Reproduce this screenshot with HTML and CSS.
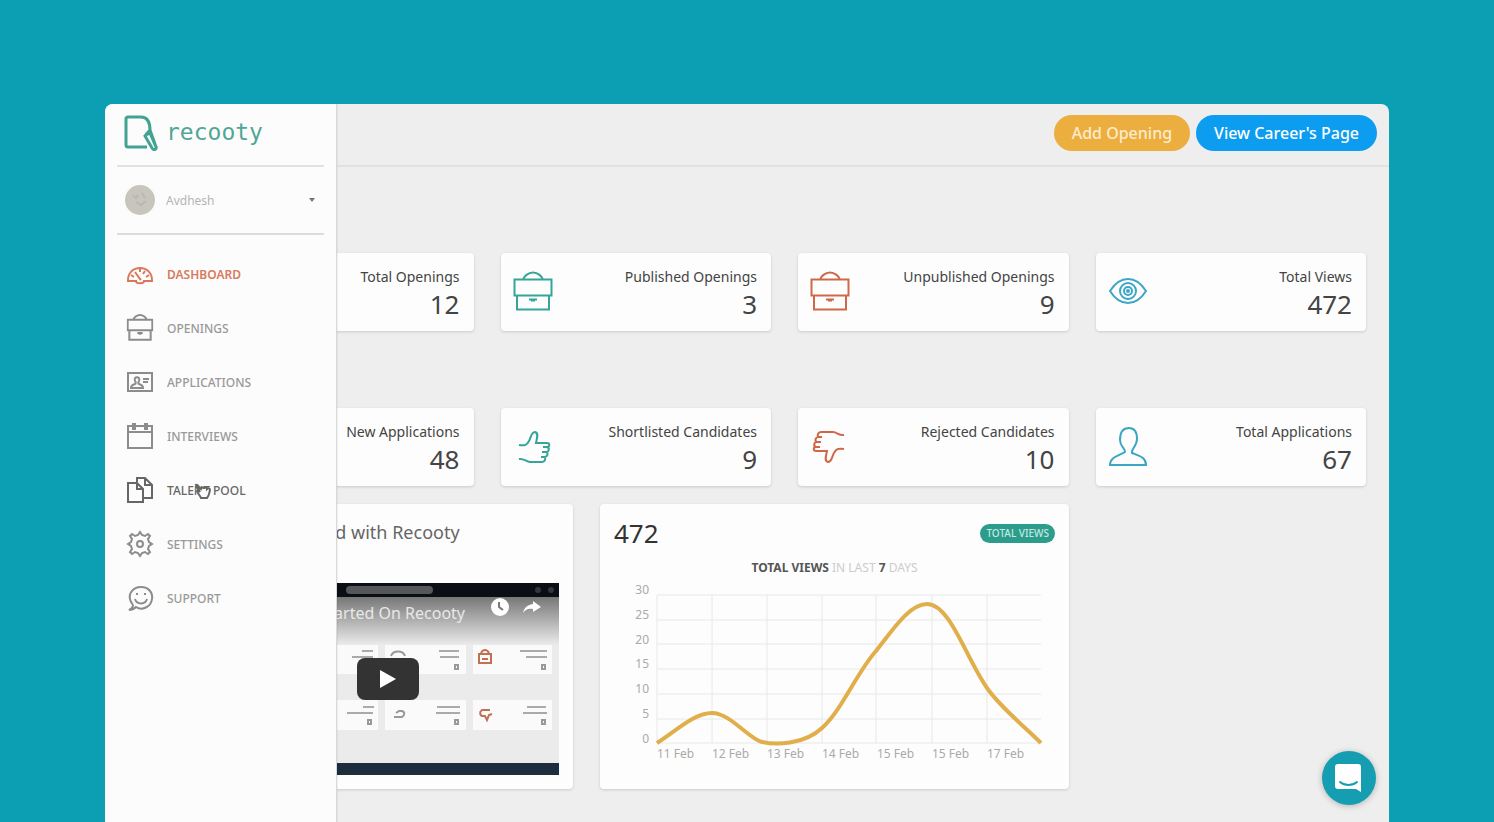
FILE: index.html
```html
<!DOCTYPE html>
<html lang="en">
<head>
    <meta charset="UTF-8">
    <meta name="viewport" content="width=device-width, initial-scale=1.0">
    <title>Recooty - Dashboard</title>
    <link rel="stylesheet" href="styles.css">
</head>
<body>
    <!-- shared icons -->
    <svg class="sprite" aria-hidden="true">
        <symbol id="briefcase" viewBox="0 0 40 42">
            <path d="M1.500 8.500h37v16h-37zM4 24.500v14h32v-14M10 8.500c1-3 5-7 10-7s9 4 10 7M16 28.500h8M18 29.500h4"/>
        </symbol>
        <symbol id="thumb" viewBox="0 0 40 42">
            <path d="M6 19c6 1 8 0 10-4 2-3 2-9 6-9 4 1 2 6 1 11h11c3 0 3 4 0 4h-4M34 21c3 1 2 5-1 5h-4M33 26c3 1 1 5-1 5h-4M32 31c1 3-1 5-3 5H17c-4 0-6-4-11-3"/>
        </symbol>
    </svg>

    <div class="window">
        <!-- sidebar -->
        <aside class="sidebar">
            <a class="logo" href="#">
                <svg width="34" height="36" viewBox="0 0 34 36">
                    <path d="M23 32H4a2 2 0 0 1-2-2V4a2 2 0 0 1 2-2h13c6 0 9 4 9 13l-5 6 7 12c2 3 5 1 4-1l-6-17M22 20l4-2 6 14"/>
                </svg>
                <span>recooty</span>
            </a>
            <button class="user" type="button">
                <svg class="avatar" width="30" height="30" viewBox="0 0 30 30">
                    <circle cx="15" cy="15" r="15" fill="#c8c5be"/>
                    <path d="M8 10l3 3 2-3M17 8l3 5M11 17l5 3 5-4" fill="none" stroke="#bbb8b1" stroke-width="2"/>
                </svg>
                <span class="user-name">Avdhesh</span>
                <span class="caret"></span>
            </button>
            <nav class="menu">
                <a class="menu-item active" href="#">
                    <svg viewBox="0 0 28 28"><path d="M2 20c0-7 5-12 12-12s12 5 12 12v1h-8c0 3-8 3-8 0H2zM9 12l5 7 1 1M14 8v4M5 15l3 2M23 15l-3 2M19 11l-2 3"/></svg>
                    Dashboard
                </a>
                <a class="menu-item" href="#">
                    <svg viewBox="0 0 40 42" class="wide"><use href="#briefcase"/></svg>
                    Openings
                </a>
                <a class="menu-item" href="#">
                    <svg viewBox="0 0 28 28"><path d="M2 5h24v18H2zM5 20c0-3 2-3 4-4 1 0 1-2 0-3-2-5 6-5 4 0-1 1-1 3 0 3 2 1 4 1 4 4zM17 11h6M17 14h5"/></svg>
                    Applications
                </a>
                <a class="menu-item" href="#">
                    <svg viewBox="0 0 28 28"><path d="M2 4h24v22H2zM2 10h24M7 2h2v5H7zM19 2h2v5h-2z"/></svg>
                    Interviews
                </a>
                <a class="menu-item hover" href="#">
                    <svg viewBox="0 0 28 28"><path d="M2 7h9l6 6v13H2zM11 7v6h6M11 6V2h8l7 7v13h-9M19 2v7h7"/></svg>
                    Talent Pool
                    <svg class="pointer" viewBox="0 0 18 18"><path d="M2 2c2-1 3 3 5 4 0-2 3-2 3 0 0-2 3-2 3 0 1-1 3-1 3 1-1 4-1 6-3 8H7C6 12 3 10 3 8c1-1 2 0 3 1z"/></svg>
                </a>
                <a class="menu-item" href="#">
                    <svg viewBox="0 0 28 28"><path d="M12 5l2-3 2 3 3 1 3-2 2 2-2 3 1 3 3 2-3 2-1 3 2 3-2 2-3-2-3 1-2 3-2-3-3-1-3 2-2-2 2-3-1-3-3-2 3-2 1-3-2-3 2-2 3 2z"/><circle cx="14" cy="14" r="3"/></svg>
                    Settings
                </a>
                <a class="menu-item" href="#">
                    <svg viewBox="0 0 28 28"><path d="M7 21C-1 11 7 3 15 3s12 6 11 12c-1 8-10 12-16 8-2 2-4 3-7 3 2-1 4-3 4-5M9 15c2 6 10 6 12 0M11 9v2M19 9v2"/></svg>
                    Support
                </a>
            </nav>
        </aside>

        <!-- top bar -->
        <header class="topbar">
            <button class="btn btn-add" type="button">Add Opening</button>
            <button class="btn btn-career" type="button">View Career's Page</button>
        </header>

        <main class="content">
            <section class="cards">
                <div class="card blue">
                    <svg class="card-icon"><use href="#briefcase"/></svg>
                    <div><h2>Total Openings</h2><p>12</p></div>
                </div>
                <div class="card green">
                    <svg class="card-icon"><use href="#briefcase"/></svg>
                    <div><h2>Published Openings</h2><p>3</p></div>
                </div>
                <div class="card red">
                    <svg class="card-icon"><use href="#briefcase"/></svg>
                    <div><h2>Unpublished Openings</h2><p>9</p></div>
                </div>
                <div class="card blue">
                    <svg class="card-icon" viewBox="0 0 40 42"><path d="M2 20C12 4 28 4 38 20 28 36 12 36 2 20z"/><circle cx="20" cy="20" r="8"/><circle cx="20" cy="20" r="4"/><circle cx="20" cy="20" r="1"/></svg>
                    <div><h2>Total Views</h2><p>472</p></div>
                </div>
            </section>

            <section class="cards">
                <div class="card blue">
                    <svg class="card-icon"><use href="#briefcase"/></svg>
                    <div><h2>New Applications</h2><p>48</p></div>
                </div>
                <div class="card green">
                    <svg class="card-icon"><use href="#thumb"/></svg>
                    <div><h2>Shortlisted Candidates</h2><p>9</p></div>
                </div>
                <div class="card red">
                    <svg class="card-icon rotated"><use href="#thumb"/></svg>
                    <div><h2>Rejected Candidates</h2><p>10</p></div>
                </div>
                <div class="card blue">
                    <svg class="card-icon" viewBox="0 0 40 42"><path d="M17 26c1-3-5-5-5-12C12 6 15 2 21 2s8 4 8 11-6 10-5 14c7 3 14 4 14 12H2c0-8 8-9 15-13z"/></svg>
                    <div><h2>Total Applications</h2><p>67</p></div>
                </div>
            </section>

            <section class="panels">
                <div class="panel">
                    <h2 class="panel-title">Getting Started with Recooty</h2>
                    <div class="video">
                        <svg class="video-shot" viewBox="0 0 342 192">
                            <defs>
                                <linearGradient id="shade" x1="0" y1="0" x2="0" y2="1">
                                    <stop offset="0" stop-color="#777"/>
                                    <stop offset="1" stop-color="#777" stop-opacity="0"/>
                                </linearGradient>
                            </defs>
                            <rect width="342" height="192" fill="#ebebeb"/>
                            <rect y="14" width="342" height="48" fill="url(#shade)"/>
                            <rect width="342" height="14" fill="#0b0e14"/>
                            <rect x="129" y="3" width="87" height="8" rx="4" fill="#55575a"/>
                            <circle cx="321" cy="7" r="3" fill="#33363b"/>
                            <circle cx="334" cy="7" r="3" fill="#33363b"/>
                            <g fill="#fafafa">
                                <rect x="80" y="62" width="81" height="29"/><rect x="168" y="62" width="81" height="29"/><rect x="256" y="62" width="79" height="29"/>
                                <rect x="80" y="117" width="81" height="30"/><rect x="168" y="117" width="81" height="30"/><rect x="256" y="117" width="79" height="30"/>
                            </g>
                            <g stroke="#aaa" stroke-width="2">
                                <path d="M145 68h11M135 74h21M222 68h20M223 74h19M303 68h27M309 74h21"/>
                                <path d="M146 124h11M130 130h26M220 124h23M219 130h24M310 124h19M306 130h24"/>
                            </g>
                            <g fill="none" stroke="#999" stroke-width="2">
                                <path d="M238 82h3v4h-3zM325 82h3v4h-3zM151 137h3v4h-3zM238 137h3v4h-3zM325 137h3v4h-3zM174 73c2-6 12-6 14 0M177 134h8c3-2 3-5 0-6h-3l-3 2"/>
                                <path d="M262 71h12v9h-12zM264 70c2-4 6-4 8 0M265 76h6M273 127h-8c-3 2-2 5 0 6h3l2 4 2-5 3-1" stroke="#c17152"/>
                            </g>
                            <rect y="180" width="342" height="12" fill="#1c2e3d"/>
                        </svg>
                        <span class="video-title">Getting Started On Recooty</span>
                        <div class="video-actions">
                            <svg viewBox="0 0 18 18" width="18" height="18"><circle cx="9" cy="9" r="9" fill="#fff"/><path d="M8 4v5l4 3" fill="none" stroke="#777" stroke-width="2"/></svg>
                            <svg viewBox="0 0 18 18" width="18" height="18"><path d="M10 3l8 6-8 5v-3c-5-1-8 1-10 4 1-5 4-8 10-9z" fill="#fff"/></svg>
                        </div>
                        <button class="play" type="button" aria-label="Play">
                            <svg viewBox="0 0 16 18" width="16" height="18"><path d="M0 0l16 9-16 9z" fill="#fff"/></svg>
                        </button>
                    </div>
                </div>

                <div class="panel">
                    <div class="panel-head">
                        <p class="count">472</p>
                        <span class="badge">TOTAL VIEWS</span>
                    </div>
                    <p class="chart-title"><b>TOTAL VIEWS</b> IN LAST <b>7</b> DAYS</p>
                    <svg class="chart" viewBox="0 0 441 190">
                        <path class="grid" d="M43 17h384M43 42h384M43 66h384M43 91h384M43 116h384M43 141h384M43 165h384M43 17v148M98 17v148M153 17v148M208 17v148M262 17v148M318 17v148M373 17v148"/>
                        <g text-anchor="end">
                            <text x="35" y="16">30</text>
                            <text x="35" y="41">25</text>
                            <text x="35" y="66">20</text>
                            <text x="35" y="90">15</text>
                            <text x="35" y="115">10</text>
                            <text x="35" y="140">5</text>
                            <text x="35" y="165">0</text>
                        </g>
                        <text x="43" y="180">11 Feb</text>
                        <text x="98" y="180">12 Feb</text>
                        <text x="153" y="180">13 Feb</text>
                        <text x="208" y="180">14 Feb</text>
                        <text x="263" y="180">15 Feb</text>
                        <text x="318" y="180">15 Feb</text>
                        <text x="373" y="180">17 Feb</text>
                        <path class="line" d="M43 165C62 153 80 135 98 135S135 161 148 164 190 167 208 150C228 132 243 94 262 73 278 53 295 26 313 26 336 26 352 80 373 110 386 129 410 148 427 165"/>
                    </svg>
                </div>
            </section>
        </main>

        <button class="chat" type="button" aria-label="Chat">
            <svg viewBox="0 0 28 30" width="28" height="30"><path d="M3 1h20a3 3 0 0 1 3 3v25l-5-3H3a3 3 0 0 1-3-3V4a3 3 0 0 1 3-3z" fill="#fff"/><path d="M5 19c5 4 12 4 17 0" fill="none" stroke="#159eb2" stroke-width="2" stroke-linecap="round"/></svg>
        </button>
    </div>
</body>
</html>
```

FILE: styles.css
```css
* {
    box-sizing: border-box;
}
body {
    margin: 0;
    padding: 104px 105px 0;
    background: #0c9fb4;
    font-family: "Noto Sans", sans-serif;
    color: #444;
}
h2, p {
    margin: 0;
    font-weight: 400;
}
button {
    border: none;
    font-family: inherit;
    cursor: pointer;
}
a {
    text-decoration: none;
}
.sprite {
    display: none;
}
.window {
    position: relative;
    min-height: calc(100vh - 104px);
    background: #eee;
    border-radius: 8px 8px 0 0;
    overflow: hidden;
}

/* sidebar slides over the dashboard */
.sidebar {
    position: absolute;
    z-index: 2;
    top: 0;
    bottom: 0;
    left: 0;
    width: 232px;
    padding: 0 12px;
    background: #fcfcfc;
    border-right: 1px solid #d8d8d8;
    box-shadow: 0 0 2px rgba(0, 0, 0, 0.15);
}
.logo {
    display: flex;
    align-items: center;
    gap: 8px;
    height: 63px;
    padding: 0 0 4px 7px;
    border-bottom: 2px solid #e2e2e2;
    color: #4fa696;
    font-family: "DejaVu Sans Mono", monospace;
    font-size: 23px;
}
.logo svg {
    fill: none;
    stroke: #43a393;
    stroke-width: 3;
}
.logo span {
    padding-bottom: 2px;
}
.user {
    display: flex;
    align-items: center;
    gap: 11px;
    width: 100%;
    height: 68px;
    padding: 0 9px 0 8px;
    background: none;
    border-bottom: 2px solid #dcdcdc;
    color: #b4b4b4;
    font-size: 12px;
}
.user-name {
    flex: 1;
    text-align: left;
}
.caret {
    border: 3px solid transparent;
    border-top: 4px solid #777;
    border-bottom: none;
}
.menu {
    padding-top: 12px;
}
.menu-item {
    position: relative;
    display: flex;
    align-items: center;
    gap: 13px;
    height: 54px;
    padding-left: 9px;
    color: #999;
    font-size: 12px;
    font-weight: 500;
    text-transform: uppercase;
}
.menu-item svg {
    width: 28px;
    height: 28px;
    fill: none;
    stroke: #8c8c8c;
    stroke-width: 2;
}
.menu-item .wide {
    stroke-width: 3;
}
.menu-item.active {
    color: #d9795c;
    font-weight: 600;
}
.menu-item.active svg {
    stroke: #d9795c;
}
.menu-item.hover {
    color: #666;
}
.menu-item.hover svg {
    stroke: #666;
}
.menu-item .pointer {
    position: absolute;
    left: 77px;
    top: 20px;
    width: 18px;
    height: 18px;
    fill: #fcfcfc;
}

.topbar {
    display: flex;
    justify-content: flex-end;
    align-items: center;
    gap: 6px;
    height: 63px;
    padding: 0 12px 4px 0;
    border-bottom: 2px solid #e2e0e1;
}
.btn {
    height: 36px;
    padding: 0 18px;
    border-radius: 18px;
    color: #fff;
    font-size: 16px;
    font-weight: 500;
}
.btn-add {
    background: #ecae3f;
    color: #fdeccb;
}
.btn-career {
    background: #0c9df0;
}

.content {
    padding: 86px 23px 34px 98px;
}
.cards {
    display: grid;
    grid-template-columns: repeat(4, 1fr);
    gap: 27px;
    margin-bottom: 77px;
}
.cards + .cards {
    margin-bottom: 18px;
}
.card, .panel {
    background: #fdfdfd;
    border-radius: 4px;
    box-shadow: 0 1px 3px rgba(0, 0, 0, 0.15);
}
.card {
    display: flex;
    justify-content: space-between;
    align-items: center;
    height: 78px;
    padding: 0 14px 0 12px;
    text-align: right;
}
.card h2 {
    font-size: 14px;
    line-height: 24px;
}
.card p {
    font-size: 26px;
    line-height: 30px;
}
.card-icon {
    width: 40px;
    height: 42px;
    fill: none;
    stroke: currentColor;
    stroke-width: 2;
}
.card-icon.rotated {
    transform: rotate(180deg);
}
.green .card-icon {
    color: #35a597;
}
.red .card-icon {
    color: #cf6849;
}
.blue .card-icon {
    color: #3ca6c4;
}

.panels {
    display: grid;
    grid-template-columns: 370fr 469fr 270fr;
    gap: 27px;
}
.panel {
    padding: 14px;
}
.panel-title {
    margin-bottom: 36px;
    color: #666;
    font-size: 18px;
    line-height: 29px;
}
.video {
    position: relative;
}
.video-shot {
    display: block;
    width: 100%;
}
.video-title {
    position: absolute;
    top: 18px;
    right: 94px;
    color: #e8e8e8;
    font-size: 16px;
    line-height: 24px;
}
.video-actions {
    position: absolute;
    top: 15px;
    right: 18px;
    display: flex;
    gap: 14px;
}
.play {
    position: absolute;
    top: 50%;
    left: 50%;
    display: flex;
    justify-content: center;
    align-items: center;
    width: 62px;
    height: 42px;
    padding: 0;
    transform: translate(-50%, -50%);
    background: #333;
    border-radius: 8px;
}
.panel-head {
    display: flex;
    justify-content: space-between;
    align-items: center;
    height: 30px;
}
.count {
    font-size: 26px;
    color: #333;
}
.badge {
    padding: 0 6px;
    background: #2c9d8c;
    border-radius: 10px;
    color: #c3e8e1;
    font-size: 10px;
    font-weight: 500;
    line-height: 19px;
}
.chart-title {
    margin-top: 10px;
    color: #ccc;
    font-size: 12px;
    line-height: 20px;
    text-align: center;
}
.chart-title b {
    color: #555;
    font-weight: 700;
}
.chart {
    display: block;
    width: 100%;
}
.chart text {
    fill: #aaa;
    font-size: 12px;
}
.grid {
    fill: none;
    stroke: #e8e8e8;
}
.line {
    fill: none;
    stroke: #e0af4c;
    stroke-width: 4;
}

.chat {
    position: absolute;
    right: 13px;
    bottom: 18px;
    display: flex;
    justify-content: center;
    align-items: center;
    width: 54px;
    height: 54px;
    padding: 0;
    background: #159eb2;
    border-radius: 50%;
    box-shadow: 0 1px 6px rgba(0, 0, 0, 0.25);
}
```
